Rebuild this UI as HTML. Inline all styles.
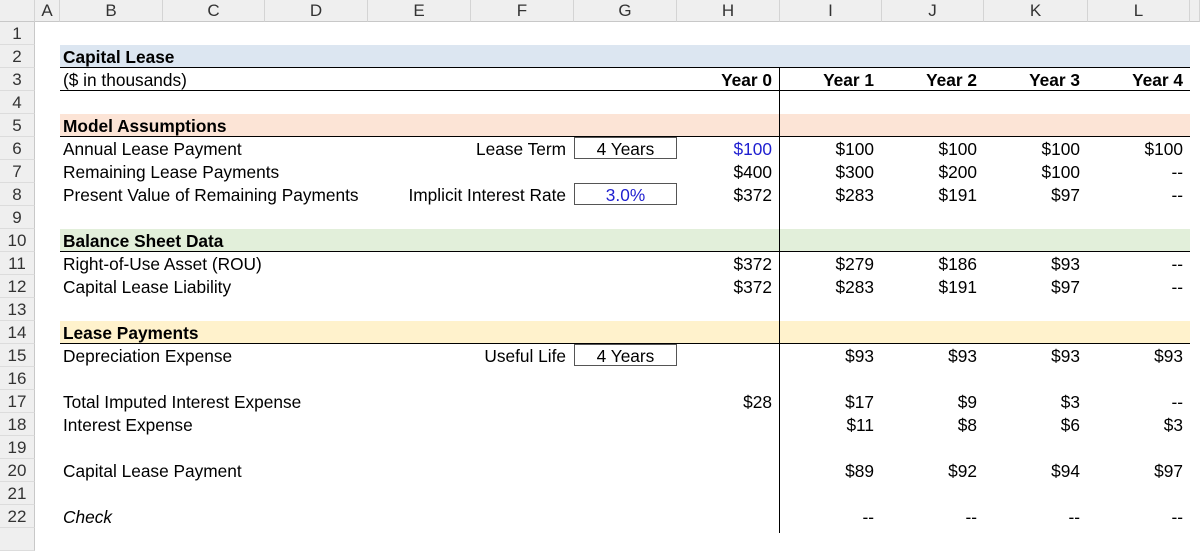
<!DOCTYPE html><html><head><style>
body{margin:0;width:1200px;height:533px;overflow:hidden;background:#fff;font-family:"Liberation Sans",Arial,sans-serif;font-size:17.3px;color:#000;position:relative}
.a{position:absolute}
.ch{position:absolute;top:0;height:22px;line-height:22px;text-align:center;background:#efefef;border-right:1px solid #d4d4d4;border-bottom:1px solid #c8c8c8;box-sizing:border-box;color:#333;font-size:17px}
.rh{position:absolute;left:0;width:35px;height:23px;line-height:24px;text-align:center;background:#efefef;border-right:1px solid #c8c8c8;border-bottom:1px solid #dcdcdc;box-sizing:border-box;color:#333;font-size:17px}
.t{position:absolute;height:23px;line-height:25px;white-space:nowrap}
.r{text-align:right}
.band{position:absolute;left:60px;width:1130px;height:23px}
.hl{position:absolute;left:60px;width:1130px;height:1px;background:#000}
.box{position:absolute;left:574px;width:103px;height:22px;border:1px solid #555;box-sizing:border-box;text-align:center;line-height:22px}
b{font-weight:bold}
</style></head><body>
<div class="ch" style="left:0;width:35px"></div>
<div class="ch" style="left:35px;width:25px">A</div>
<div class="ch" style="left:60px;width:103px">B</div>
<div class="ch" style="left:163px;width:102px">C</div>
<div class="ch" style="left:265px;width:103px">D</div>
<div class="ch" style="left:368px;width:103px">E</div>
<div class="ch" style="left:471px;width:103px">F</div>
<div class="ch" style="left:574px;width:103px">G</div>
<div class="ch" style="left:677px;width:103px">H</div>
<div class="ch" style="left:780px;width:102px">I</div>
<div class="ch" style="left:882px;width:102px">J</div>
<div class="ch" style="left:984px;width:104px">K</div>
<div class="ch" style="left:1088px;width:102px">L</div>
<div class="ch" style="left:1190px;width:10px"></div>

<div class="rh" style="top:22px">1</div><div class="rh" style="top:45px">2</div><div class="rh" style="top:68px">3</div><div class="rh" style="top:91px">4</div><div class="rh" style="top:114px">5</div><div class="rh" style="top:137px">6</div><div class="rh" style="top:160px">7</div><div class="rh" style="top:183px">8</div><div class="rh" style="top:206px">9</div><div class="rh" style="top:229px">10</div><div class="rh" style="top:252px">11</div><div class="rh" style="top:275px">12</div><div class="rh" style="top:298px">13</div><div class="rh" style="top:321px">14</div><div class="rh" style="top:344px">15</div><div class="rh" style="top:367px">16</div><div class="rh" style="top:390px">17</div><div class="rh" style="top:413px">18</div><div class="rh" style="top:436px">19</div><div class="rh" style="top:459px">20</div><div class="rh" style="top:482px">21</div><div class="rh" style="top:505px">22</div><div class="rh" style="top:528px"></div>

<div class="band" style="top:45px;background:#dce6f1"></div>
<div class="band" style="top:114px;background:#fce4d6"></div>
<div class="band" style="top:229px;background:#e2efda"></div>
<div class="band" style="top:321px;background:#fff2cc"></div>
<div class="hl" style="top:67px"></div>
<div class="hl" style="top:90px"></div>
<div class="hl" style="top:136px"></div>
<div class="hl" style="top:251px"></div>
<div class="hl" style="top:343px"></div>
<div class="a" style="left:779px;top:68px;width:1px;height:465px;background:#000"></div>

<div class="t" style="left:63px;top:45px"><b>Capital Lease</b></div>
<div class="t" style="left:63px;top:68px">($ in thousands)</div>
<div class="t r" style="right:428px;top:68px"><b>Year 0</b></div>
<div class="t r" style="right:326px;top:68px"><b>Year 1</b></div>
<div class="t r" style="right:223px;top:68px"><b>Year 2</b></div>
<div class="t r" style="right:120px;top:68px"><b>Year 3</b></div>
<div class="t r" style="right:17px;top:68px"><b>Year 4</b></div>

<div class="t" style="left:63px;top:114px"><b>Model Assumptions</b></div>
<div class="t" style="left:63px;top:137px">Annual Lease Payment</div>
<div class="t r" style="right:634px;top:137px">Lease Term</div>
<div class="box" style="top:137px">4 Years</div>
<div class="t r" style="right:428px;top:137px;color:#1f1fd0">$100</div>
<div class="t r" style="right:326px;top:137px">$100</div><div class="t r" style="right:223px;top:137px">$100</div><div class="t r" style="right:120px;top:137px">$100</div><div class="t r" style="right:17px;top:137px">$100</div>

<div class="t" style="left:63px;top:160px">Remaining Lease Payments</div>
<div class="t r" style="right:428px;top:160px">$400</div><div class="t r" style="right:326px;top:160px">$300</div><div class="t r" style="right:223px;top:160px">$200</div><div class="t r" style="right:120px;top:160px">$100</div><div class="t r" style="right:17px;top:160px">--</div>

<div class="t" style="left:63px;top:183px">Present Value of Remaining Payments</div>
<div class="t r" style="right:634px;top:183px">Implicit Interest Rate</div>
<div class="box" style="top:183px;color:#1f1fd0">3.0%</div>
<div class="t r" style="right:428px;top:183px">$372</div><div class="t r" style="right:326px;top:183px">$283</div><div class="t r" style="right:223px;top:183px">$191</div><div class="t r" style="right:120px;top:183px">$97</div><div class="t r" style="right:17px;top:183px">--</div>

<div class="t" style="left:63px;top:229px"><b>Balance Sheet Data</b></div>
<div class="t" style="left:63px;top:252px">Right-of-Use Asset (ROU)</div>
<div class="t r" style="right:428px;top:252px">$372</div><div class="t r" style="right:326px;top:252px">$279</div><div class="t r" style="right:223px;top:252px">$186</div><div class="t r" style="right:120px;top:252px">$93</div><div class="t r" style="right:17px;top:252px">--</div>
<div class="t" style="left:63px;top:275px">Capital Lease Liability</div>
<div class="t r" style="right:428px;top:275px">$372</div><div class="t r" style="right:326px;top:275px">$283</div><div class="t r" style="right:223px;top:275px">$191</div><div class="t r" style="right:120px;top:275px">$97</div><div class="t r" style="right:17px;top:275px">--</div>

<div class="t" style="left:63px;top:321px"><b>Lease Payments</b></div>
<div class="t" style="left:63px;top:344px">Depreciation Expense</div>
<div class="t r" style="right:634px;top:344px">Useful Life</div>
<div class="box" style="top:344px">4 Years</div>
<div class="t r" style="right:326px;top:344px">$93</div><div class="t r" style="right:223px;top:344px">$93</div><div class="t r" style="right:120px;top:344px">$93</div><div class="t r" style="right:17px;top:344px">$93</div>

<div class="t" style="left:63px;top:390px">Total Imputed Interest Expense</div>
<div class="t r" style="right:428px;top:390px">$28</div><div class="t r" style="right:326px;top:390px">$17</div><div class="t r" style="right:223px;top:390px">$9</div><div class="t r" style="right:120px;top:390px">$3</div><div class="t r" style="right:17px;top:390px">--</div>
<div class="t" style="left:63px;top:413px">Interest Expense</div>
<div class="t r" style="right:326px;top:413px">$11</div><div class="t r" style="right:223px;top:413px">$8</div><div class="t r" style="right:120px;top:413px">$6</div><div class="t r" style="right:17px;top:413px">$3</div>

<div class="t" style="left:63px;top:459px">Capital Lease Payment</div>
<div class="t r" style="right:326px;top:459px">$89</div><div class="t r" style="right:223px;top:459px">$92</div><div class="t r" style="right:120px;top:459px">$94</div><div class="t r" style="right:17px;top:459px">$97</div>

<div class="t" style="left:63px;top:505px;font-style:italic">Check</div>
<div class="t r" style="right:326px;top:505px">--</div><div class="t r" style="right:223px;top:505px">--</div><div class="t r" style="right:120px;top:505px">--</div><div class="t r" style="right:17px;top:505px">--</div>
</body></html>
